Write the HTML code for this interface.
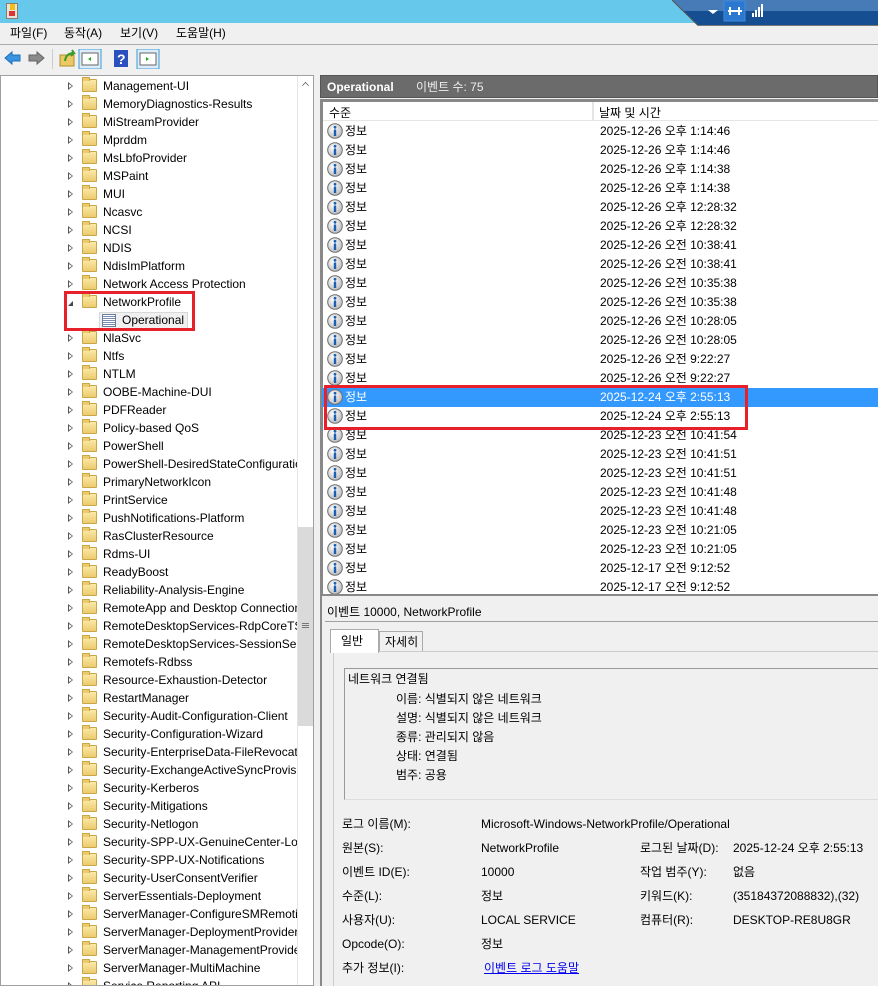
<!DOCTYPE html>
<html><head><meta charset="utf-8">
<style>
*{margin:0;padding:0;box-sizing:border-box}
body{width:878px;height:986px;overflow:hidden;background:#f0f0f0;font-family:"Liberation Sans","Noto Sans CJK KR",sans-serif;font-size:12px;color:#000;position:relative}
.a{position:absolute;white-space:nowrap}
.tr{position:absolute;left:0;height:18px;line-height:18px;white-space:nowrap}
.exp{position:absolute;left:67px;top:5px;width:0;height:0;border-left:5px solid #555;border-top:4px solid transparent;border-bottom:4px solid transparent}
.exp:after{content:"";position:absolute;left:-4px;top:-2px;border-left:3px solid #fff;border-top:2px solid transparent;border-bottom:2px solid transparent}
.fold{position:absolute;left:81px;top:2px;width:15px;height:13px;background:linear-gradient(#fbe9a8,#eccb6e);border:1px solid #c9a648;border-radius:1px}
.fold:before{content:"";position:absolute;left:-1px;top:-3px;width:6px;height:3px;background:#eccb6e;border:1px solid #c9a648;border-bottom:none}
.tt{position:absolute;left:102px}
.row{position:absolute;left:322px;width:556px;height:19px;line-height:19px;white-space:nowrap}
.row svg{position:absolute;left:5px;top:1px}
.row .l{position:absolute;left:23px}
.row .d{position:absolute;left:278px}
.sel{background:#3399ff;color:#fff}
.f{position:absolute;white-space:nowrap;line-height:16px}
</style></head><body>
<!-- title bar -->
<div class="a" style="left:0;top:0;width:878px;height:23px;background:#66c8eb"></div>
<div class="a" style="left:6px;top:3px;width:12px;height:16px;background:#e8e4dc;border:1px solid #8a7d6a"></div>
<div class="a" style="left:9px;top:11px;width:6px;height:5px;background:#d33"></div>
<div class="a" style="left:10px;top:4px;width:5px;height:6px;background:#f3c018"></div>
<svg class="a" style="left:672px;top:0" width="206" height="27"><polygon points="0,0 206,0 206,25 26,25" fill="#154f91"/><polygon points="0,0 206,0 206,11 10,11" fill="#5b8fc7" opacity=".7"/><line x1="0" y1="0" x2="26" y2="25.5" stroke="#555"/><line x1="26" y1="25.5" x2="206" y2="25.5" stroke="#777"/><polygon points="36,10 46,10 41,14" fill="#fff"/><rect x="52" y="1" width="21" height="20" fill="#2a78cf" stroke="#3d8be0"/><rect x="56" y="10" width="14" height="2" fill="#fff"/><rect x="57" y="7" width="2" height="8" fill="#fff"/><rect x="66" y="7" width="2" height="8" fill="#fff"/><rect x="80" y="13" width="2" height="4" fill="#fff"/><rect x="83" y="10" width="2" height="7" fill="#fff"/><rect x="86" y="7" width="2" height="10" fill="#fff"/><rect x="89" y="4" width="2" height="13" fill="#fff"/></svg>
<!-- menu -->
<div class="a" style="left:10px;top:25px;line-height:17px">파일(F)</div>
<div class="a" style="left:64px;top:25px;line-height:17px">동작(A)</div>
<div class="a" style="left:120px;top:25px;line-height:17px">보기(V)</div>
<div class="a" style="left:176px;top:25px;line-height:17px">도움말(H)</div>
<div class="a" style="left:0;top:44px;width:878px;height:1px;background:#aaa"></div>
<!-- toolbar -->
<svg class="a" style="left:4px;top:49px" width="160" height="20">
<path d="M1,9 L8,3 L8,6 L16,6 L16,12 L8,12 L8,15 Z" fill="#3a93e0" stroke="#1d6fbd"/>
<path d="M40,9 L33,3 L33,6 L25,6 L25,12 L33,12 L33,15 Z" fill="#8a8a8a" stroke="#666"/>
<rect x="48" y="0" width="1" height="20" fill="#ccc"/>
<rect x="56" y="6" width="14" height="11" fill="#ecc965" stroke="#b18e2e"/><path d="M61,12 Q62,4 70,4 L68,1 M70,4 L67,7" stroke="#3a9a2a" stroke-width="2" fill="none"/>
<rect x="75" y="0" width="22" height="20" fill="#dcecf8" stroke="#3c9ad8"/><rect x="78" y="4" width="16" height="12" fill="#fff" stroke="#666"/><polygon points="87,8 84,10 87,12" fill="#2a2"/>
<rect x="110" y="1" width="14" height="17" fill="#2b4fbf"/><text x="113" y="15" fill="#fff" font-size="14" font-weight="bold" font-family="Liberation Sans">?</text>
<rect x="133" y="0" width="22" height="20" fill="#dcecf8" stroke="#3c9ad8"/><rect x="136" y="4" width="16" height="12" fill="#fff" stroke="#666"/><polygon points="142,8 145,10 142,12" fill="#2a2"/>
</svg>
<!-- tree pane -->
<div class="a" style="left:0;top:75px;width:314px;height:911px;background:#fff;border:1px solid #a0a0a0;overflow:hidden">
<div class="a" style="left:0;top:0;width:296px;height:911px;overflow:hidden">
<div class="tr" style="top:1px"><i class="exp"></i><i class="fold"></i><span class="tt">Management-UI</span></div>
<div class="tr" style="top:19px"><i class="exp"></i><i class="fold"></i><span class="tt">MemoryDiagnostics-Results</span></div>
<div class="tr" style="top:37px"><i class="exp"></i><i class="fold"></i><span class="tt">MiStreamProvider</span></div>
<div class="tr" style="top:55px"><i class="exp"></i><i class="fold"></i><span class="tt">Mprddm</span></div>
<div class="tr" style="top:73px"><i class="exp"></i><i class="fold"></i><span class="tt">MsLbfoProvider</span></div>
<div class="tr" style="top:91px"><i class="exp"></i><i class="fold"></i><span class="tt">MSPaint</span></div>
<div class="tr" style="top:109px"><i class="exp"></i><i class="fold"></i><span class="tt">MUI</span></div>
<div class="tr" style="top:127px"><i class="exp"></i><i class="fold"></i><span class="tt">Ncasvc</span></div>
<div class="tr" style="top:145px"><i class="exp"></i><i class="fold"></i><span class="tt">NCSI</span></div>
<div class="tr" style="top:163px"><i class="exp"></i><i class="fold"></i><span class="tt">NDIS</span></div>
<div class="tr" style="top:181px"><i class="exp"></i><i class="fold"></i><span class="tt">NdisImPlatform</span></div>
<div class="tr" style="top:199px"><i class="exp"></i><i class="fold"></i><span class="tt">Network Access Protection</span></div>
<div class="tr" style="top:217px"><span class="a" style="left:67px;top:8px;width:0;height:0;border-right:5px solid #444;border-top:5px solid transparent"></span><i class="fold"></i><span class="tt">NetworkProfile</span></div>
<div class="tr" style="top:235px"><span class="a" style="left:98px;top:1px;width:89px;height:17px;background:#f0f0f0;border:1px solid #d8d8d8"></span><span class="a" style="left:101px;top:3px;width:14px;height:13px;background:#fff;border:1px solid #6a7d99;background-image:repeating-linear-gradient(#fff 0 1px,#7a8db0 1px 2px)"></span><span class="tt" style="left:121px">Operational</span></div>
<div class="tr" style="top:253px"><i class="exp"></i><i class="fold"></i><span class="tt">NlaSvc</span></div>
<div class="tr" style="top:271px"><i class="exp"></i><i class="fold"></i><span class="tt">Ntfs</span></div>
<div class="tr" style="top:289px"><i class="exp"></i><i class="fold"></i><span class="tt">NTLM</span></div>
<div class="tr" style="top:307px"><i class="exp"></i><i class="fold"></i><span class="tt">OOBE-Machine-DUI</span></div>
<div class="tr" style="top:325px"><i class="exp"></i><i class="fold"></i><span class="tt">PDFReader</span></div>
<div class="tr" style="top:343px"><i class="exp"></i><i class="fold"></i><span class="tt">Policy-based QoS</span></div>
<div class="tr" style="top:361px"><i class="exp"></i><i class="fold"></i><span class="tt">PowerShell</span></div>
<div class="tr" style="top:379px"><i class="exp"></i><i class="fold"></i><span class="tt">PowerShell-DesiredStateConfiguration</span></div>
<div class="tr" style="top:397px"><i class="exp"></i><i class="fold"></i><span class="tt">PrimaryNetworkIcon</span></div>
<div class="tr" style="top:415px"><i class="exp"></i><i class="fold"></i><span class="tt">PrintService</span></div>
<div class="tr" style="top:433px"><i class="exp"></i><i class="fold"></i><span class="tt">PushNotifications-Platform</span></div>
<div class="tr" style="top:451px"><i class="exp"></i><i class="fold"></i><span class="tt">RasClusterResource</span></div>
<div class="tr" style="top:469px"><i class="exp"></i><i class="fold"></i><span class="tt">Rdms-UI</span></div>
<div class="tr" style="top:487px"><i class="exp"></i><i class="fold"></i><span class="tt">ReadyBoost</span></div>
<div class="tr" style="top:505px"><i class="exp"></i><i class="fold"></i><span class="tt">Reliability-Analysis-Engine</span></div>
<div class="tr" style="top:523px"><i class="exp"></i><i class="fold"></i><span class="tt">RemoteApp and Desktop Connections</span></div>
<div class="tr" style="top:541px"><i class="exp"></i><i class="fold"></i><span class="tt">RemoteDesktopServices-RdpCoreTS</span></div>
<div class="tr" style="top:559px"><i class="exp"></i><i class="fold"></i><span class="tt">RemoteDesktopServices-SessionServices</span></div>
<div class="tr" style="top:577px"><i class="exp"></i><i class="fold"></i><span class="tt">Remotefs-Rdbss</span></div>
<div class="tr" style="top:595px"><i class="exp"></i><i class="fold"></i><span class="tt">Resource-Exhaustion-Detector</span></div>
<div class="tr" style="top:613px"><i class="exp"></i><i class="fold"></i><span class="tt">RestartManager</span></div>
<div class="tr" style="top:631px"><i class="exp"></i><i class="fold"></i><span class="tt">Security-Audit-Configuration-Client</span></div>
<div class="tr" style="top:649px"><i class="exp"></i><i class="fold"></i><span class="tt">Security-Configuration-Wizard</span></div>
<div class="tr" style="top:667px"><i class="exp"></i><i class="fold"></i><span class="tt">Security-EnterpriseData-FileRevocation</span></div>
<div class="tr" style="top:685px"><i class="exp"></i><i class="fold"></i><span class="tt">Security-ExchangeActiveSyncProvisioning</span></div>
<div class="tr" style="top:703px"><i class="exp"></i><i class="fold"></i><span class="tt">Security-Kerberos</span></div>
<div class="tr" style="top:721px"><i class="exp"></i><i class="fold"></i><span class="tt">Security-Mitigations</span></div>
<div class="tr" style="top:739px"><i class="exp"></i><i class="fold"></i><span class="tt">Security-Netlogon</span></div>
<div class="tr" style="top:757px"><i class="exp"></i><i class="fold"></i><span class="tt">Security-SPP-UX-GenuineCenter-Logging</span></div>
<div class="tr" style="top:775px"><i class="exp"></i><i class="fold"></i><span class="tt">Security-SPP-UX-Notifications</span></div>
<div class="tr" style="top:793px"><i class="exp"></i><i class="fold"></i><span class="tt">Security-UserConsentVerifier</span></div>
<div class="tr" style="top:811px"><i class="exp"></i><i class="fold"></i><span class="tt">ServerEssentials-Deployment</span></div>
<div class="tr" style="top:829px"><i class="exp"></i><i class="fold"></i><span class="tt">ServerManager-ConfigureSMRemoting</span></div>
<div class="tr" style="top:847px"><i class="exp"></i><i class="fold"></i><span class="tt">ServerManager-DeploymentProvider</span></div>
<div class="tr" style="top:865px"><i class="exp"></i><i class="fold"></i><span class="tt">ServerManager-ManagementProvider</span></div>
<div class="tr" style="top:883px"><i class="exp"></i><i class="fold"></i><span class="tt">ServerManager-MultiMachine</span></div>
<div class="tr" style="top:901px"><i class="exp"></i><i class="fold"></i><span class="tt">Service Reporting API</span></div>
</div>
<!-- scrollbar -->
<div class="a" style="left:296px;top:0;width:17px;height:911px;background:#fff;border-left:1px solid #e6e6e6"></div>
<div class="a" style="left:297px;top:451px;width:16px;height:199px;background:#dadada"></div>
<div class="a" style="left:301px;top:547px;width:7px;height:1px;background:#777;box-shadow:0 2px #777,0 4px #777"></div>
<div class="a" style="left:301px;top:6px;width:7px;height:7px;border-left:1px solid #555;border-top:1px solid #555;transform:rotate(45deg) scale(.7)"></div>
</div>
<!-- splitter -->
<div class="a" style="left:314px;top:75px;width:6px;height:911px;background:#f0f0f0"></div>
<!-- right header -->
<div class="a" style="left:320px;top:75px;width:558px;height:23px;background:#6b6b6b;border:1px solid #555;color:#fff;line-height:22px"><b style="position:absolute;left:6px;font-weight:bold">Operational</b><span style="position:absolute;left:95px;color:#eee">이벤트 수: 75</span></div>
<!-- list -->
<div class="a" style="left:320px;top:99px;width:558px;height:497px;background:#fff;border:3px solid #888;border-right:none;border-bottom:2px solid #888"></div>
<div class="a" style="left:323px;top:102px;width:555px;height:19px;background:#fff;border-bottom:1px solid #e5e5e5"></div>
<div class="a" style="left:592px;top:102px;width:2px;height:18px;background:#e5e5e5"></div>
<div class="a" style="left:329px;top:104px">수준</div>
<div class="a" style="left:599px;top:104px">날짜 및 시간</div>
<div class="a" style="left:322px;top:121px;width:556px;height:474px;overflow:hidden">
<svg width="0" height="0" style="position:absolute"><defs><radialGradient id="g" cx=".4" cy=".35" r=".7"><stop offset="0" stop-color="#fff"/><stop offset="1" stop-color="#b8b8b8"/></radialGradient><symbol id="ic" viewBox="0 0 16 16"><circle cx="8" cy="8" r="7.3" fill="url(#g)" stroke="#6e6e6e"/><circle cx="8" cy="4.3" r="1.4" fill="#1a5fb4"/><rect x="6.8" y="6.5" width="2.4" height="6.5" fill="#1a5fb4"/></symbol></defs></svg>
</div>
<div id="rows"></div>
<!-- rows -->
<div class="row" style="top:122px"><svg width="16" height="16"><use href="#ic"/></svg><span class="l">정보</span><span class="d">2025-12-26 오후 1:14:46</span></div>
<div class="row" style="top:141px"><svg width="16" height="16"><use href="#ic"/></svg><span class="l">정보</span><span class="d">2025-12-26 오후 1:14:46</span></div>
<div class="row" style="top:160px"><svg width="16" height="16"><use href="#ic"/></svg><span class="l">정보</span><span class="d">2025-12-26 오후 1:14:38</span></div>
<div class="row" style="top:179px"><svg width="16" height="16"><use href="#ic"/></svg><span class="l">정보</span><span class="d">2025-12-26 오후 1:14:38</span></div>
<div class="row" style="top:198px"><svg width="16" height="16"><use href="#ic"/></svg><span class="l">정보</span><span class="d">2025-12-26 오후 12:28:32</span></div>
<div class="row" style="top:217px"><svg width="16" height="16"><use href="#ic"/></svg><span class="l">정보</span><span class="d">2025-12-26 오후 12:28:32</span></div>
<div class="row" style="top:236px"><svg width="16" height="16"><use href="#ic"/></svg><span class="l">정보</span><span class="d">2025-12-26 오전 10:38:41</span></div>
<div class="row" style="top:255px"><svg width="16" height="16"><use href="#ic"/></svg><span class="l">정보</span><span class="d">2025-12-26 오전 10:38:41</span></div>
<div class="row" style="top:274px"><svg width="16" height="16"><use href="#ic"/></svg><span class="l">정보</span><span class="d">2025-12-26 오전 10:35:38</span></div>
<div class="row" style="top:293px"><svg width="16" height="16"><use href="#ic"/></svg><span class="l">정보</span><span class="d">2025-12-26 오전 10:35:38</span></div>
<div class="row" style="top:312px"><svg width="16" height="16"><use href="#ic"/></svg><span class="l">정보</span><span class="d">2025-12-26 오전 10:28:05</span></div>
<div class="row" style="top:331px"><svg width="16" height="16"><use href="#ic"/></svg><span class="l">정보</span><span class="d">2025-12-26 오전 10:28:05</span></div>
<div class="row" style="top:350px"><svg width="16" height="16"><use href="#ic"/></svg><span class="l">정보</span><span class="d">2025-12-26 오전 9:22:27</span></div>
<div class="row" style="top:369px"><svg width="16" height="16"><use href="#ic"/></svg><span class="l">정보</span><span class="d">2025-12-26 오전 9:22:27</span></div>
<div class="row sel" style="top:388px"><svg width="16" height="16"><use href="#ic"/></svg><span class="l">정보</span><span class="d">2025-12-24 오후 2:55:13</span></div>
<div class="row" style="top:407px"><svg width="16" height="16"><use href="#ic"/></svg><span class="l">정보</span><span class="d">2025-12-24 오후 2:55:13</span></div>
<div class="row" style="top:426px"><svg width="16" height="16"><use href="#ic"/></svg><span class="l">정보</span><span class="d">2025-12-23 오전 10:41:54</span></div>
<div class="row" style="top:445px"><svg width="16" height="16"><use href="#ic"/></svg><span class="l">정보</span><span class="d">2025-12-23 오전 10:41:51</span></div>
<div class="row" style="top:464px"><svg width="16" height="16"><use href="#ic"/></svg><span class="l">정보</span><span class="d">2025-12-23 오전 10:41:51</span></div>
<div class="row" style="top:483px"><svg width="16" height="16"><use href="#ic"/></svg><span class="l">정보</span><span class="d">2025-12-23 오전 10:41:48</span></div>
<div class="row" style="top:502px"><svg width="16" height="16"><use href="#ic"/></svg><span class="l">정보</span><span class="d">2025-12-23 오전 10:41:48</span></div>
<div class="row" style="top:521px"><svg width="16" height="16"><use href="#ic"/></svg><span class="l">정보</span><span class="d">2025-12-23 오전 10:21:05</span></div>
<div class="row" style="top:540px"><svg width="16" height="16"><use href="#ic"/></svg><span class="l">정보</span><span class="d">2025-12-23 오전 10:21:05</span></div>
<div class="row" style="top:559px"><svg width="16" height="16"><use href="#ic"/></svg><span class="l">정보</span><span class="d">2025-12-17 오전 9:12:52</span></div>
<div class="row" style="top:578px;height:16px;overflow:hidden"><svg width="16" height="16"><use href="#ic"/></svg><span class="l">정보</span><span class="d">2025-12-17 오전 9:12:52</span></div>
<!-- details -->
<div class="a" style="left:320px;top:596px;width:558px;height:390px;border-left:2px solid #888;background:#f0f0f0"></div>
<div class="a" style="left:327px;top:603px">이벤트 10000, NetworkProfile</div>
<div class="a" style="left:325px;top:621px;width:553px;height:1px;background:#a0a0a0"></div>
<div class="a" style="left:333px;top:651px;width:545px;height:335px;border-left:1px solid #ccc;border-top:1px solid #ccc;background:#f0f0f0"></div>
<div class="a" style="left:330px;top:629px;width:49px;height:24px;background:#fff;border:1px solid #aaa;border-bottom:none;padding:2px 0 0 10px">일반</div>
<div class="a" style="left:379px;top:631px;width:44px;height:20px;background:#f0f0f0;border:1px solid #aaa;border-bottom:none;padding:1px 0 0 5px">자세히</div>
<div class="a" style="left:344px;top:668px;width:534px;height:132px;border-top:1px solid #999;border-left:1px solid #999;border-bottom:1px solid #ddd"></div>
<div class="f" style="left:348px;top:671px">네트워크 연결됨</div>
<div class="f" style="left:396px;top:691px">이름: 식별되지 않은 네트워크</div>
<div class="f" style="left:396px;top:710px">설명: 식별되지 않은 네트워크</div>
<div class="f" style="left:396px;top:729px">종류: 관리되지 않음</div>
<div class="f" style="left:396px;top:748px">상태: 연결됨</div>
<div class="f" style="left:396px;top:767px">범주: 공용</div>
<div class="f" style="left:342px;top:816px">로그 이름(M):</div><div class="f" style="left:481px;top:816px">Microsoft-Windows-NetworkProfile/Operational</div>
<div class="f" style="left:342px;top:840px">원본(S):</div><div class="f" style="left:481px;top:840px">NetworkProfile</div>
<div class="f" style="left:640px;top:840px">로그된 날짜(D):</div><div class="f" style="left:733px;top:840px">2025-12-24 오후 2:55:13</div>
<div class="f" style="left:342px;top:864px">이벤트 ID(E):</div><div class="f" style="left:481px;top:864px">10000</div>
<div class="f" style="left:640px;top:864px">작업 범주(Y):</div><div class="f" style="left:733px;top:864px">없음</div>
<div class="f" style="left:342px;top:888px">수준(L):</div><div class="f" style="left:481px;top:888px">정보</div>
<div class="f" style="left:640px;top:888px">키워드(K):</div><div class="f" style="left:733px;top:888px">(35184372088832),(32)</div>
<div class="f" style="left:342px;top:912px">사용자(U):</div><div class="f" style="left:481px;top:912px">LOCAL SERVICE</div>
<div class="f" style="left:640px;top:912px">컴퓨터(R):</div><div class="f" style="left:733px;top:912px">DESKTOP-RE8U8GR</div>
<div class="f" style="left:342px;top:936px">Opcode(O):</div><div class="f" style="left:481px;top:936px">정보</div>
<div class="f" style="left:342px;top:960px">추가 정보(I):</div><div class="f" style="left:484px;top:960px;color:#0000ee;text-decoration:underline">이벤트 로그 도움말</div>
<!-- red boxes -->
<div class="a" style="left:64px;top:291px;width:131px;height:40px;border:3px solid #e8202a"></div>
<div class="a" style="left:324px;top:385px;width:424px;height:45px;border:3px solid #e8202a"></div>
</body></html>
